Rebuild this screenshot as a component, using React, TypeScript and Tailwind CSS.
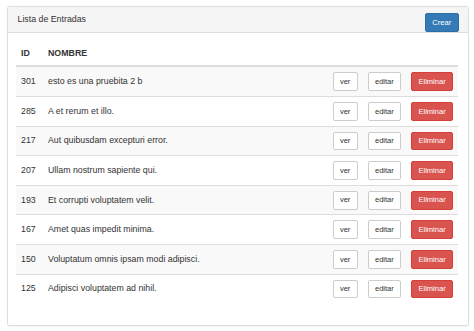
import React from "react";

type Entrada = { id: number; nombre: string };

const entradas: Entrada[] = [
  { id: 301, nombre: "esto es una pruebita 2 b" },
  { id: 285, nombre: "A et rerum et illo." },
  { id: 217, nombre: "Aut quibusdam excepturi error." },
  { id: 207, nombre: "Ullam nostrum sapiente qui." },
  { id: 193, nombre: "Et corrupti voluptatem velit." },
  { id: 167, nombre: "Amet quas impedit minima." },
  { id: 150, nombre: "Voluptatum omnis ipsam modi adipisci." },
  { id: 125, nombre: "Adipisci voluptatem ad nihil." },
];

// botones estilo bootstrap btn-sm (escala reducida)
const btnBase =
  "h-[18.9px] px-[6.3px] rounded-[2px] border text-[7.56px] leading-none flex items-center";

export default function App() {
  return (
    <div
      className="min-h-screen bg-white pt-[6px] pl-[7px] text-[#333]"
      style={{ fontFamily: '"Liberation Sans", Arial, Helvetica, sans-serif' }}
    >
      {/* Panel */}
      <div className="w-[462px] rounded-[2.5px] border border-[#ddd] bg-white shadow-[0_1px_1px_rgba(0,0,0,0.05)]">
        {/* Heading */}
        <div className="h-[26px] flex justify-between items-start bg-[#f5f5f5] border-b border-[#ddd] rounded-t-[2px] pt-[6.3px] pl-[9.5px] pr-[9.5px]">
          <span className="text-[8.8px] leading-[12.6px]">Lista de Entradas</span>
          <button className={`${btnBase} bg-[#337ab7] border-[#2e6da4] text-white`}>
            Crear
          </button>
        </div>

        {/* Body */}
        <div className="pt-[9.5px] pb-[9.5px] pl-[8px] pr-[10px]">
          <div className="mb-[12.6px] text-[8.8px]">
            {/* Table head */}
            <div className="h-[24px] flex items-center border-b-2 border-[#ddd] font-bold">
              <div className="w-[27px] px-[5px]">ID</div>
              <div className="flex-1 px-[5px]">NOMBRE</div>
            </div>

            {/* Rows */}
            {entradas.map((e, i) => (
              <div
                key={e.id}
                className={`h-[29.6px] flex items-center ${
                  i > 0 ? "border-t border-[#ddd]" : ""
                } ${i % 2 === 0 ? "bg-[#f9f9f9]" : "bg-white"}`}
              >
                <div className="w-[27px] px-[5px]">{e.id}</div>
                <div className="flex-1 px-[5px]">{e.nombre}</div>
                <div className="px-[5px]">
                  <button className={`${btnBase} bg-white border-[#ccc] text-[#333]`}>ver</button>
                </div>
                <div className="px-[5px]">
                  <button className={`${btnBase} bg-white border-[#ccc] text-[#333]`}>editar</button>
                </div>
                <div className="px-[5px]">
                  <button className={`${btnBase} bg-[#d9534f] border-[#d43f3a] text-white`}>
                    Eliminar
                  </button>
                </div>
              </div>
            ))}
          </div>
        </div>
      </div>
    </div>
  );
}
